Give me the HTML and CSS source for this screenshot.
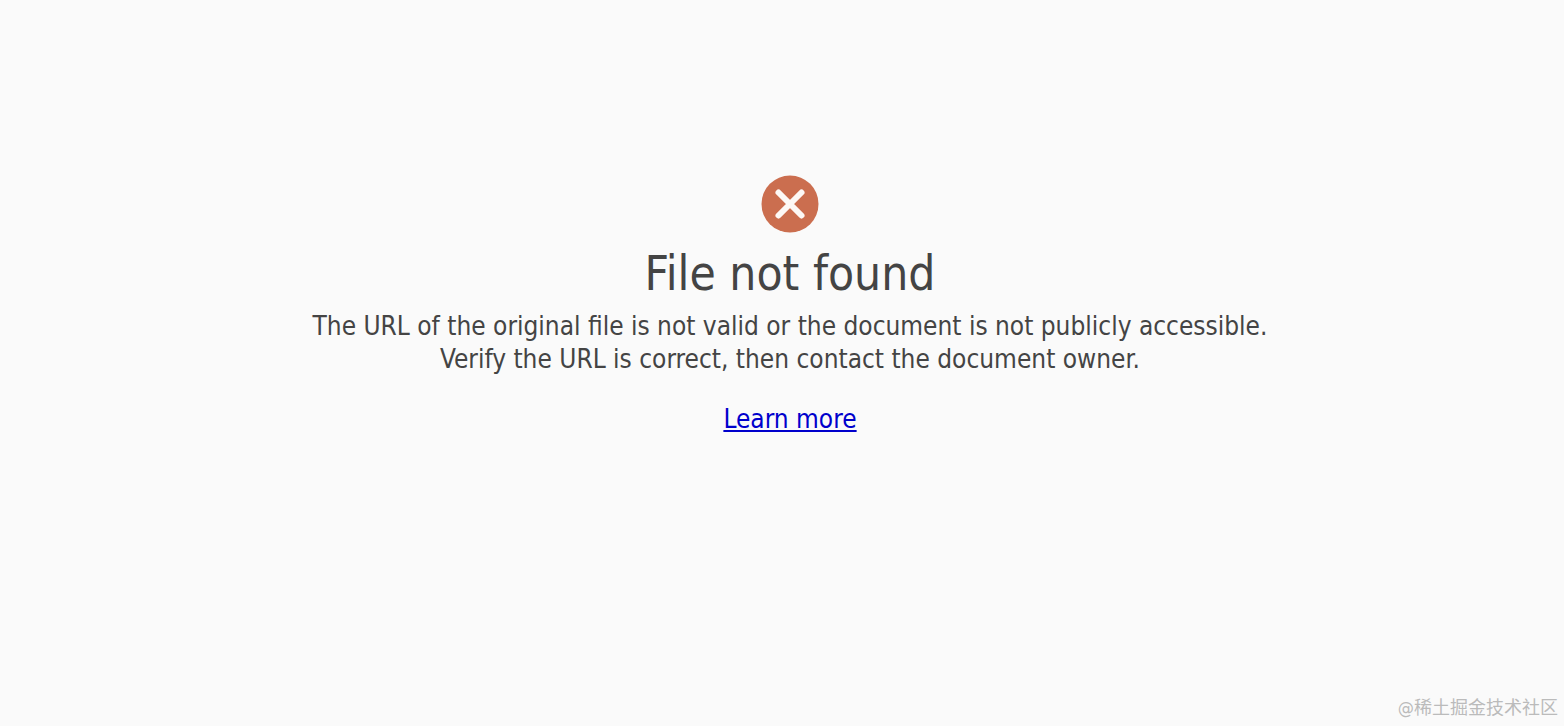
FILE: index.html
```html
<!DOCTYPE html>
<html>
<head>
	<meta charset="utf-8">
	<title>File not found</title>
	<link rel="stylesheet" href="styles.css">
</head>
<body>
	<div class="main">
		<svg class="error-icon" width="58" height="58" viewBox="0 0 58 58">
			<circle cx="29" cy="29" r="28.5" fill="#cb6e4f"/>
			<path d="M17.5 17.5 L40.5 40.5 M40.5 17.5 L17.5 40.5" stroke="#fdf8f5" stroke-width="6" stroke-linecap="round" fill="none"/>
		</svg>
		<h1>File not found</h1>
		<p>The URL of the original file is not valid or the document is not publicly accessible.<br>Verify the URL is correct, then contact the document owner.</p>
		<a href="#">Learn more</a>
	</div>
	<div class="watermark">@稀土掘金技术社区</div>
</body>
</html>
```

FILE: styles.css
```css
* {
	margin: 0;
	padding: 0;
}
html, body {
	height: 100%;
}
body {
	display: flex;
	flex-direction: column;
	background: #fafafa;
	font-family: "DejaVu Sans", "Noto Sans CJK SC", sans-serif;
	font-stretch: condensed;
	color: #444;
	overflow: hidden;
}
.main {
	flex: 1;
	display: flex;
	flex-direction: column;
	align-items: center;
	padding: 175px 0 0 16px;
	text-align: center;
}
.error-icon {
	display: block;
	margin-bottom: 11px;
}
h1 {
	font-size: 47.5px;
	font-weight: normal;
	line-height: 60px;
}
p {
	margin-top: 6px;
	font-size: 26px;
	line-height: 33px;
}
a {
	margin-top: 27px;
	font-size: 26px;
	line-height: 33px;
	color: #00c;
}
.watermark {
	align-self: flex-end;
	padding: 0 6px 6px 0;
	font-size: 18px;
	line-height: 24px;
	color: #bbb;
}
```
